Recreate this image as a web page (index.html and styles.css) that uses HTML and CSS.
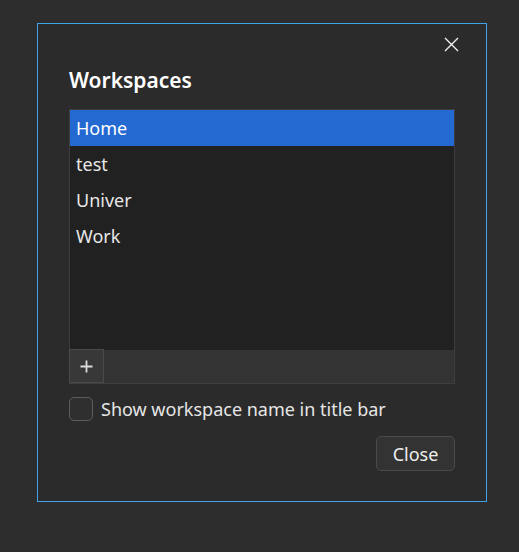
FILE: index.html
```html
<!DOCTYPE html>
<html lang="en">
<head>
    <meta charset="UTF-8">
    <title>Workspaces</title>
    <link rel="stylesheet" href="styles.css">
</head>
<body>
    <div class="dialog">
        <div class="titlebar">
            <button class="close-x" aria-label="Close">
                <svg width="15" height="15" viewBox="0 0 15 15">
                    <path d="M1 1 L14 14 M14 1 L1 14" stroke="#f0f0f0" stroke-width="1.4" fill="none"/>
                </svg>
            </button>
        </div>
        <h1>Workspaces</h1>

        <div class="list">
            <ul class="items">
                <li class="selected">Home</li>
                <li>test</li>
                <li>Univer</li>
                <li>Work</li>
            </ul>
            <div class="toolbar">
                <button class="add" aria-label="Add">
                    <svg width="15" height="15" viewBox="0 0 15 15">
                        <path d="M7.5 1.5 V13.5 M1.5 7.5 H13.5" stroke="#dcdcdc" stroke-width="1.8" fill="none"/>
                    </svg>
                </button>
            </div>
        </div>

        <label class="check">
            <span class="box"></span>
            Show workspace name in title bar
        </label>

        <div class="actions">
            <button class="btn">Close</button>
        </div>
    </div>
</body>
</html>
```

FILE: styles.css
```css
body {
    margin: 0;
    background: #2d2d2d;
    font-family: 'Noto Sans', 'Open Sans', sans-serif;
    color: #e6e6e6;
}
.dialog {
    box-sizing: border-box;
    width: 450px;
    height: 479px;
    margin: 23px 0 0 37px;
    padding: 0 31px;
    background: #2b2b2b;
    border: 1px solid #3fa2ea;
}
.titlebar {
    display: flex;
    justify-content: flex-end;
    height: 42px;
}
.close-x {
    width: 15px;
    height: 15px;
    margin: 13px -4px 0 0;
    padding: 0;
    border: none;
    background: none;
    display: flex;
}
h1 {
    margin: 0 0 15px 0;
    font-size: 21px;
    font-weight: 600;
    line-height: 28px;
    color: #ffffff;
}
.list {
    border: 1px solid #3e3e3e;
    background: #212121;
}
.items {
    list-style: none;
    margin: 0;
    padding: 0;
    height: 240px;
}
.items li {
    height: 36px;
    line-height: 36px;
    padding-left: 6px;
    font-size: 18px;
    color: #e8e8e8;
}
.items li.selected {
    background: #2469d2;
    color: #ffffff;
}
.toolbar {
    display: flex;
    height: 33px;
    background: #333333;
}
.add {
    box-sizing: border-box;
    width: 35px;
    height: 34px;
    margin: -1px 0 0 -1px;
    padding: 0;
    border: 1px solid #4a4a4a;
    background: #383838;
    display: flex;
    align-items: center;
    justify-content: center;
}
.check {
    display: flex;
    align-items: center;
    gap: 8px;
    margin-top: 13px;
    font-size: 18px;
    color: #e6e6e6;
}
.box {
    box-sizing: border-box;
    width: 24px;
    height: 24px;
    border: 1px solid #5c5c5c;
    border-radius: 5px;
    background: #2f2f2f;
}
.actions {
    display: flex;
    justify-content: flex-end;
    margin-top: 15px;
}
.btn {
    box-sizing: border-box;
    width: 79px;
    height: 35px;
    border: 1px solid #4b4b4b;
    border-radius: 5px;
    background: #333333;
    color: #eeeeee;
    font-family: 'Noto Sans', 'Open Sans', sans-serif;
    font-size: 18px;
    padding: 0;
}
```
